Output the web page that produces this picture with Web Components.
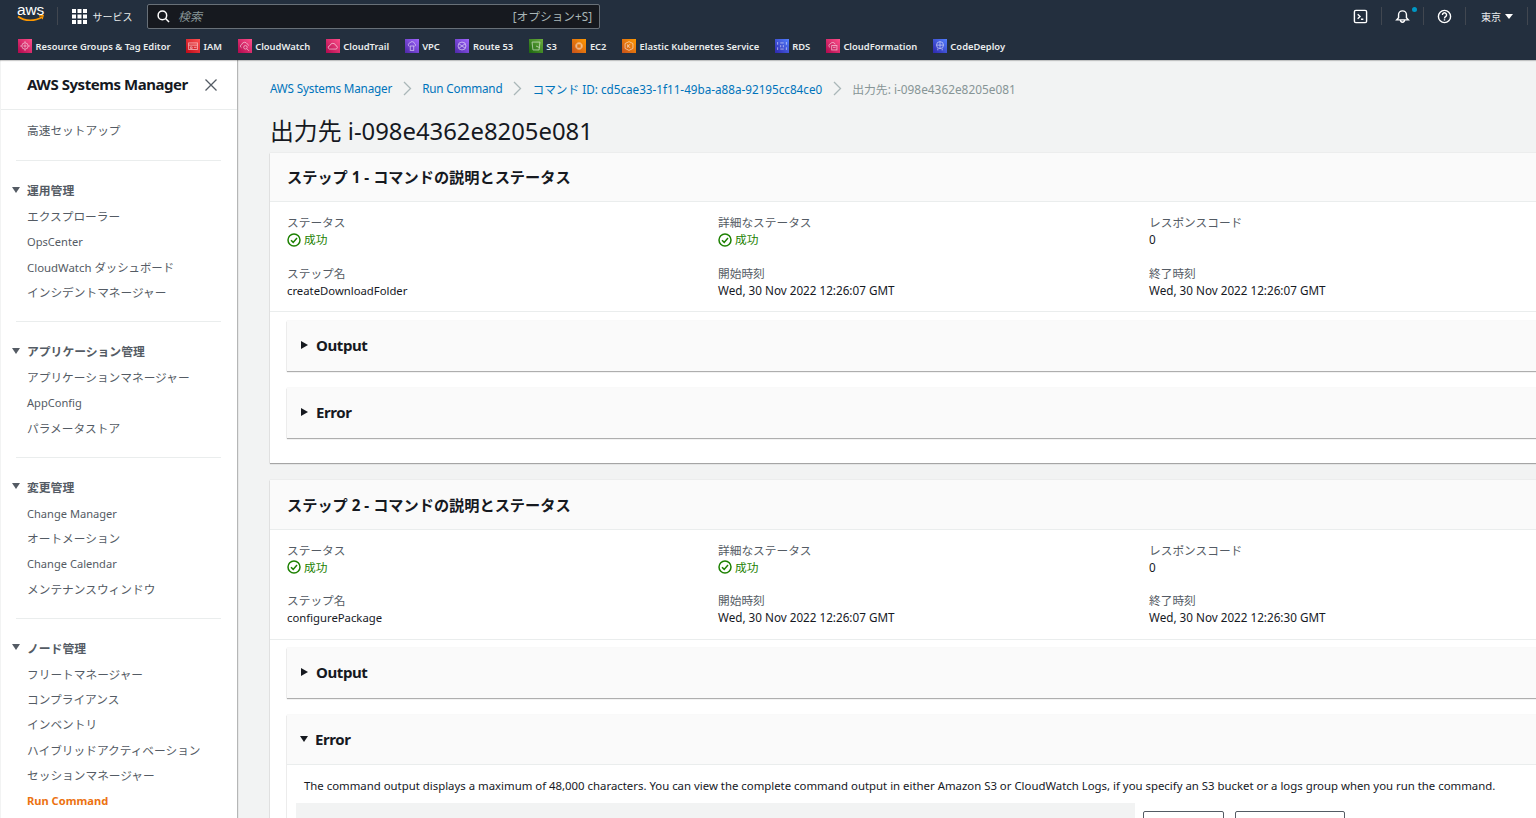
<!DOCTYPE html>
<html lang="ja"><head><meta charset="utf-8"><title>AWS Systems Manager</title>
<style>
html,body{margin:0;height:100%;overflow:hidden;background:#f2f3f3}
body{font-family:"Noto Sans","Noto Sans CJK JP",sans-serif;font-size:11.7px;color:#16191f}
aws-console{display:block;height:818px}
</style></head><body>
<aws-console></aws-console>
<script>
const FONT='"Noto Sans","Noto Sans CJK JP",sans-serif';
function def(name,css,html){
  customElements.define(name,class extends HTMLElement{
    constructor(){super();this.attachShadow({mode:'open'});}
    connectedCallback(){
      const h=typeof html==='function'?html(this):html;
      this.shadowRoot.innerHTML='<style>'+css+'</style>'+h;
    }
  });
}
const favIcons={
 rg:'<circle cx="8" cy="8" r="3.6"/><circle cx="8" cy="8" r="1.2"/><path d="M8 2.5v2M8 11.5v2M2.5 8h2M11.5 8h2"/>',
 iam:'<rect x="3" y="4.5" width="10" height="7.5"/><path d="M3 7h10M5 9h2v2H5zM9 9.5h3"/>',
 cw:'<path d="M4 10a2 2 0 0 1 .4-3.8 3.2 3.2 0 0 1 6-.6 2.2 2.2 0 0 1 1.6 2"/><circle cx="8.5" cy="9.5" r="2"/><path d="M10 11l2.5 2.5"/>',
 ct:'<path d="M4 11.5a2 2 0 0 1 .5-3.9 3.5 3.5 0 0 1 6.8 0 2 2 0 0 1 .2 3.9z"/>',
 vpc:'<path d="M5 8.5a2 2 0 0 1 .4-3.8 3 3 0 0 1 5.6.6 1.8 1.8 0 0 1 0 3.2"/><rect x="6" y="8" width="4" height="5"/>',
 r53:'<circle cx="8" cy="8" r="4.5"/><path d="M4.5 5.5l7 5M11.5 5.5l-7 5"/>',
 s3:'<path d="M3.5 3.5h9l-1 9h-7z"/><path d="M8 8l4.5 2"/>',
 ec2:'<rect x="5.5" y="5.5" width="5" height="5"/><path d="M7 3.5v2M9 3.5v2M7 10.5v2M9 10.5v2M3.5 7h2M3.5 9h2M10.5 7h2M10.5 9h2"/>',
 eks:'<path d="M8 3l4.5 2.2v5.6L8 13l-4.5-2.2V5.2z"/><path d="M6.5 6v4M6.5 8l3-2M6.5 8l3 2"/>',
 rds:'<path d="M6 4.5h4M6 11.5h4M6.5 7v2.5M9.5 7v2.5M3 3.5v3M3 9.5v3M13 3.5v3M13 9.5v3"/>',
 cf:'<path d="M4.5 9.5a2 2 0 0 1 .4-3.8 3 3 0 0 1 5.6.4"/><rect x="6.5" y="7.5" width="6" height="5"/><path d="M8 9.5h3"/>',
 cd:'<circle cx="8" cy="7" r="4"/><path d="M4 7h8M8 3v8M5.5 11v2M10.5 11v2"/>'
};
def('fav-icon',':host{display:inline-flex;width:14px;height:14px;flex:none}svg{width:14px;height:14px;display:block}',
 el=>{const [a,b]=el.getAttribute('c').split(',');return `<svg viewBox="0 0 16 16"><defs><linearGradient id="g" x1="0" y1="1" x2="1" y2="0"><stop offset="0" stop-color="${a}"/><stop offset="1" stop-color="${b}"/></linearGradient></defs><rect width="16" height="16" fill="url(#g)"/><g fill="none" stroke="#fff" stroke-width="1" opacity=".62">${favIcons[el.getAttribute('i')]}</g></svg>`;});
def('fav-item',':host{display:inline-flex;align-items:center;gap:3.5px;color:#eaeded;font-size:9.4px;font-weight:600;white-space:nowrap}',
 el=>`<fav-icon c="${el.getAttribute('c')}" i="${el.getAttribute('i')}"></fav-icon><slot></slot>`);
def('util-icon',`:host{display:flex;align-items:center;justify-content:center;width:42px;height:18px;box-sizing:border-box;border-right:1px solid #414750;position:relative}
 svg{width:15px;height:15px;display:block}
 i{position:absolute;width:5px;height:5px;border-radius:50%;background:#0097c4;top:0;right:6px}`,
 el=>{
  const k=el.getAttribute('k');
  const p={term:'<rect x="1.5" y="1.5" width="13" height="13" rx="1.5"/><path d="M5 5.5L7.5 8 5 10.5M8.5 11h2.5"/>',
   bell:'<path d="M1.8 11.6h12.4L12.2 9.3V6.2a4.2 4.2 0 0 0-8.4 0v3.1z"/><path d="M5.8 11.8c0 3 4.4 3 4.4 0"/>',
   help:'<circle cx="8" cy="8" r="6.5"/><path d="M5.8 6.3a2.2 2.2 0 1 1 3.4 1.8C8.4 8.6 8 9 8 10M8 11v1.3"/>'}[k];
  return `<svg viewBox="0 0 16 16" fill="none" stroke="#fff" stroke-width="1.5">${p}</svg>${el.hasAttribute('dot')?'<i></i>':''}`;
 });
def('top-bar',`:host{display:block;height:60px;background:#232f3e;box-sizing:border-box;color:#eaeded;font-family:${FONT};flex:none;position:relative;z-index:3;box-shadow:0 1px 1px rgba(0,0,0,.2)}
 .row1{height:32px;display:flex;align-items:center;padding-left:17px}
 .logo{width:27px;height:26px;display:flex;flex-direction:column;align-items:flex-start;position:relative}
 .logo b{font:400 15.5px/16px "Liberation Sans",sans-serif;color:#fff;letter-spacing:-.2px;margin-top:-1px}
 .logo svg{width:27px;height:8px;margin-top:-3px}
 .sep{width:1px;height:18px;background:#414750;margin:0 14px 0 13px}
 .svc{display:flex;align-items:center;gap:5.5px;font-size:10px;margin-right:14.5px;white-space:nowrap}
 .svc svg{width:15px;height:15px;display:block}
 .search{width:453px;height:25px;box-sizing:border-box;background:#16191f;border:1px solid #687078;border-radius:2px;display:flex;align-items:center;padding:0 7px 0 9px;gap:8px}
 .search svg{width:13px;height:13px;flex:none}
 .search em{font-size:12px;color:#879596;flex:1}
 .search span{font-size:11.7px;color:#aab7b8;margin-bottom:1px}
 .right{margin-left:auto;display:flex;align-items:center;padding-right:8px}
 .region{display:flex;align-items:center;gap:4px;font-size:10px;padding-left:15px;height:18px;width:62px;box-sizing:border-box;white-space:nowrap;border-right:1px solid #414750}
 .region i{width:0;height:0;border:4px solid transparent;border-top:5px solid #fff;border-bottom:0}
 .row2{height:28px;display:flex;align-items:center;padding-left:18px;gap:15.6px}`,
 `<div class="row1">
   <div class="logo"><b>aws</b><svg viewBox="0 0 27 8" fill="none"><path d="M1 1.5c7 5 17 5 24 .5" stroke="#f90" stroke-width="1.6"/><path d="M22 .8l4.2-.3-1 3.6" stroke="#f90" stroke-width="1.2"/></svg></div>
   <div class="sep"></div>
   <div class="svc"><svg viewBox="0 0 15 15" fill="#fff"><rect x="0" y="0" width="4" height="4"/><rect x="5.5" y="0" width="4" height="4"/><rect x="11" y="0" width="4" height="4"/><rect x="0" y="5.5" width="4" height="4"/><rect x="5.5" y="5.5" width="4" height="4"/><rect x="11" y="5.5" width="4" height="4"/><rect x="0" y="11" width="4" height="4"/><rect x="5.5" y="11" width="4" height="4"/><rect x="11" y="11" width="4" height="4"/></svg>サービス</div>
   <div class="search"><svg viewBox="0 0 14 14" fill="none" stroke="#fff" stroke-width="1.6"><circle cx="5.8" cy="5.8" r="4.6"/><path d="M9.2 9.2L13 13"/></svg><em>検索</em><span>[オプション+S]</span></div>
   <div class="right"><util-icon k="term"></util-icon><util-icon k="bell" dot></util-icon><util-icon k="help"></util-icon><div class="region">東京<i></i></div></div>
  </div>
  <div class="row2"><slot></slot></div>`);
def('nav-link',`:host{display:block;height:25.25px;line-height:25.25px;padding-left:26px;font-size:11.7px;color:#545b64;white-space:nowrap}
 :host([latin]){font-size:11.1px}
 :host([mixed]){font-size:11.4px}
 :host([active]){color:#ec7211;font-weight:700}`,'<slot></slot>');
def('nav-group',`:host{display:block;padding:17px 0 16px;border-top:1px solid #eaeded;margin:0 16px 0 15px}
 .w{margin:0 -16px 0 -15px}
 h3{margin:0;height:26px;box-sizing:border-box;padding:0 0 3px 11px;display:flex;align-items:center;font-size:11.8px;font-weight:700;color:#545b64;gap:7px}
 h3 i{width:0;height:0;border:4.5px solid transparent;border-top:6px solid #545b64;border-bottom:0}`,
 el=>`<div class="w"><h3><i></i>${el.getAttribute('title')}</h3><slot></slot></div>`);
def('side-nav',`:host{display:block;flex:none;margin-left:1px;width:236px;background:#fff;box-shadow:1px 0 1px rgba(0,0,0,.25);position:relative;z-index:2;overflow:hidden;font-family:${FONT}}
 header{height:50px;box-sizing:border-box;border-bottom:1px solid #eaeded;display:flex;align-items:center;padding:0 18px 1px 26px;justify-content:space-between}
 h2{margin:0;font-size:15px;letter-spacing:-.45px;font-weight:700;color:#16191f;white-space:nowrap}
 svg{width:16px;height:16px;display:block;margin-top:1px}
 .q{height:50px;display:flex;align-items:center;padding:0 0 11px 26px;font-size:11.7px;color:#545b64;box-sizing:border-box}`,
 `<header><h2>AWS Systems Manager</h2><svg viewBox="0 0 16 16" fill="none" stroke="#545b64" stroke-width="1.3"><path d="M2.5 2.5l11 11M13.5 2.5l-11 11"/></svg></header>
  <div class="q">高速セットアップ</div><slot></slot>`);
def('bread-crumbs',`:host{display:flex;align-items:center;height:58px;box-sizing:border-box;padding-bottom:2px;font-size:11.7px;white-space:nowrap;color:#879596}
 ::slotted(a){color:#0073bb;text-decoration:none}
 ::slotted(.n){letter-spacing:-.16px}
 ::slotted(span){font-size:11.85px}`,'<slot></slot>');
def('crumb-sep',':host{display:inline-flex;width:30px;justify-content:center}svg{width:9px;height:15px;display:block}',
 '<svg viewBox="0 0 9 15" fill="none" stroke="#aab7b8" stroke-width="1.3"><path d="M1 1l6.5 6.5L1 14"/></svg>');
def('kv-pair',`:host{display:block;line-height:17px;font-size:11.7px;color:#16191f;height:50.4px}
 .l{color:#545b64;display:block}`,
 el=>`<span class="l">${el.getAttribute('label')}</span><slot></slot>`);
def('ok-status',`:host{display:inline-flex;align-items:center;gap:3px;color:#1d8102;font-size:11.7px}
 svg{width:14px;height:14px;display:block}`,
 '<svg viewBox="0 0 14 14" fill="none" stroke="#1d8102" stroke-width="1.5"><circle cx="7" cy="7" r="6"/><path d="M4 7.2l2.2 2.2L10 5"/></svg><slot></slot>');
def('expand-panel',`:host{display:block;background:#fff;margin-left:17px;box-shadow:0 1px 1px rgba(0,0,0,.3),0 0 1px rgba(0,0,0,.15)}
 header{height:50px;box-sizing:border-box;background:#fafafa;display:flex;align-items:center;padding:0 0 2px 14px;gap:8px;font-size:15px;letter-spacing:-.4px;font-weight:700}
 :host([open]) header{border-bottom:1px solid #eaeded;gap:7px;padding-left:13px;padding-bottom:1px}
 i{width:0;height:0;border:4px solid transparent;border-left:7px solid #16191f;border-right:0}
 :host([open]) i{border:4.5px solid transparent;border-top:6px solid #16191f;border-bottom:0}`,
 el=>`<header><i></i>${el.getAttribute('title')}</header><div><slot></slot></div>`);
def('step-card',`:host{display:block;background:#fff;box-shadow:0 1px 1px rgba(0,0,0,.3),0 0 1px rgba(0,0,0,.15);margin-bottom:17px;padding-bottom:25.2px;font-family:${FONT}}
 header{height:49.6px;box-sizing:border-box;background:#fafafa;border-bottom:1px solid #eaeded;display:flex;align-items:center;padding:0 0 1px 17px;font-size:15.2px;font-weight:700}
 .g{display:grid;grid-template-columns:repeat(3,431px);padding:12px 0 0 17px;height:110px;box-sizing:border-box;border-bottom:1px solid #eaeded;margin-bottom:8.5px}
 .stack{display:flex;flex-direction:column;gap:17px}`,
 el=>`<header>${el.getAttribute('title')}</header><div class="g"><slot name="kv"></slot></div><div class="stack"><slot></slot></div>`);
def('copy-btn',`:host{display:inline-block;height:30px;box-sizing:border-box;border:1px solid #545b64;border-radius:2px;background:#fff}`,'<slot></slot>');
def('main-area',`:host{display:block;flex:1;min-width:0;overflow:hidden;padding-left:33px;font-family:${FONT}}
 .w{width:1330px}
 h1{margin:0 0 8.7px;font-size:23.85px;font-weight:400;line-height:26px;white-space:nowrap;color:#16191f}`,
 ()=>`<div class="w"><slot name="crumbs"></slot><h1>出力先 i-098e4362e8205e081</h1><slot></slot></div>`);
def('aws-console',`:host{display:flex;flex-direction:column;height:818px;overflow:hidden}
 .body{flex:1;display:flex;min-height:0;background:#f2f3f3}
 .e{font-size:11.38px;padding:13px 0 0 17px;height:38px;box-sizing:border-box;white-space:nowrap;color:#16191f}
 .nm{font-size:11.3px}
 .code{display:flex;gap:8px;margin:0 0 0 9px;align-items:flex-start}
 .code div{width:839px;height:80px;background:#f2f3f3;flex:none}
 .btns{display:flex;gap:11px;padding-top:8px}
 copy-btn:nth-child(1){width:81px}copy-btn:nth-child(2){width:110px}`,
 ()=>{
 const P='#b0084d,#ff4f8b',R='#bd0816,#ff5252',U='#4d27a8,#a166ff',G='#1b660f,#6cae3e',O='#c8511b,#ff9900',B='#2e27ad,#527fff';
 const favs=[[P,'rg','Resource Groups & Tag Editor'],[R,'iam','IAM'],[P,'cw','CloudWatch'],[P,'ct','CloudTrail'],[U,'vpc','VPC'],[U,'r53','Route 53'],[G,'s3','S3'],[O,'ec2','EC2'],[O,'eks','Elastic Kubernetes Service'],[B,'rds','RDS'],[P,'cf','CloudFormation'],[B,'cd','CodeDeploy']];
 const groups=[['運用管理',['エクスプローラー','OpsCenter','CloudWatch ダッシュボード','インシデントマネージャー']],['アプリケーション管理',['アプリケーションマネージャー','AppConfig','パラメータストア']],['変更管理',['Change Manager','オートメーション','Change Calendar','メンテナンスウィンドウ']],['ノード管理',['フリートマネージャー','コンプライアンス','インベントリ','ハイブリッドアクティベーション','セッションマネージャー','Run Command']]];
 const attr=n=>n==='Run Command'?' active latin':/^[A-Za-z ]+$/.test(n)?' latin':/[A-Za-z]/.test(n)?' mixed':'';
 const kv=(name,start,fin)=>`
  <kv-pair slot="kv" label="ステータス"><ok-status>成功</ok-status></kv-pair><kv-pair slot="kv" label="詳細なステータス"><ok-status>成功</ok-status></kv-pair><kv-pair slot="kv" label="レスポンスコード">0</kv-pair>
  <kv-pair slot="kv" label="ステップ名"><span class="nm">${name}</span></kv-pair><kv-pair slot="kv" label="開始時刻">${start}</kv-pair><kv-pair slot="kv" label="終了時刻">${fin}</kv-pair>`;
 return `<top-bar>${favs.map(f=>`<fav-item c="${f[0]}" i="${f[1]}">${f[2].replace('&','&amp;')}</fav-item>`).join('')}</top-bar>
 <div class="body">
  <side-nav>${groups.map(g=>`<nav-group title="${g[0]}">${g[1].map(n=>`<nav-link${attr(n)}>${n}</nav-link>`).join('')}</nav-group>`).join('')}</side-nav>
  <main-area>
   <bread-crumbs slot="crumbs"><a class="n" href="#">AWS Systems Manager</a><crumb-sep></crumb-sep><a class="n" href="#">Run Command</a><crumb-sep></crumb-sep><a href="#">コマンド ID: cd5cae33-1f11-49ba-a88a-92195cc84ce0</a><crumb-sep></crumb-sep><span>出力先: i-098e4362e8205e081</span></bread-crumbs>
   <step-card title="ステップ 1 - コマンドの説明とステータス">${kv('createDownloadFolder','Wed, 30 Nov 2022 12:26:07 GMT','Wed, 30 Nov 2022 12:26:07 GMT')}
    <expand-panel title="Output"></expand-panel><expand-panel title="Error"></expand-panel></step-card>
   <step-card title="ステップ 2 - コマンドの説明とステータス">${kv('configurePackage','Wed, 30 Nov 2022 12:26:07 GMT','Wed, 30 Nov 2022 12:26:30 GMT')}
    <expand-panel title="Output"></expand-panel><expand-panel title="Error" open><div class="e">The command output displays a maximum of 48,000 characters. You can view the complete command output in either Amazon S3 or CloudWatch Logs, if you specify an S3 bucket or a logs group when you run the command.</div><div class="code"><div></div><span class="btns"><copy-btn></copy-btn><copy-btn></copy-btn></span></div></expand-panel></step-card>
  </main-area>
 </div>`;});
</script></body></html>
